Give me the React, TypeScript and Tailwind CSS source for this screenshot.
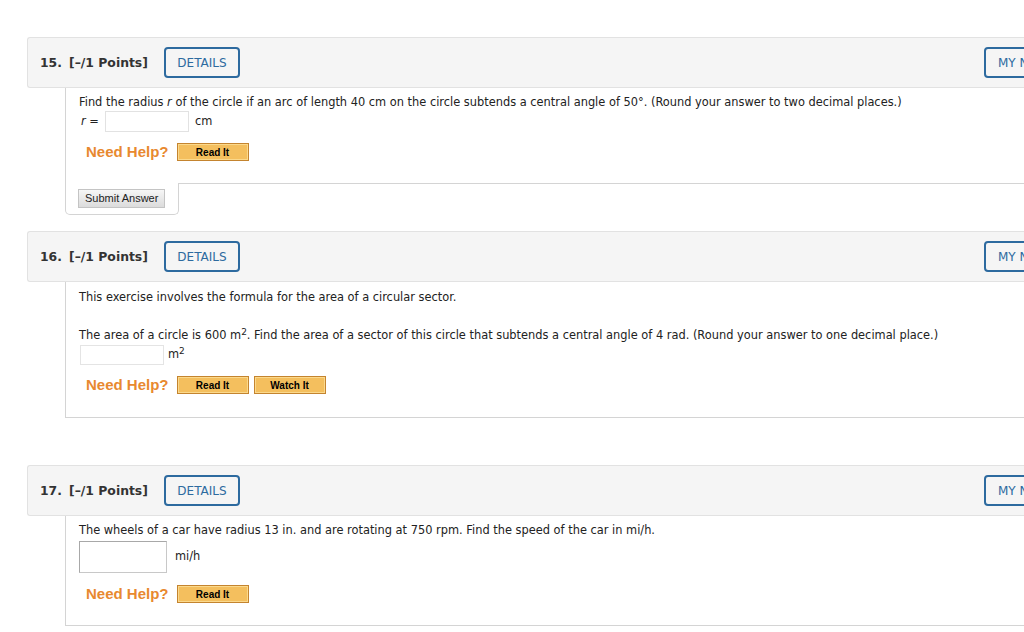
import React from 'react';

const body = "font-['DejaVu_Sans',Verdana,sans-serif] text-[11.4px] text-[#222]";

const Header = ({ num }: { num: number }) => (
  <div className="flex items-center h-[51px] border border-r-0 border-[#e2e2e2] bg-[#f5f5f5] rounded-l-[3px] pl-[12px] pr-[10px]">
    <div className="w-[124px] pt-[2px] font-['DejaVu_Sans',Verdana,sans-serif] font-bold text-[12.4px] text-[#333]">
      <span className="mr-[7px]">{num}.</span>[–/1 Points]
    </div>
    <button className="h-[31px] w-[76px] border-2 border-[#2d6a9f] rounded-[4px] text-[#2d6a9f] font-['DejaVu_Sans',Verdana,sans-serif] text-[12px] pt-[1px]">
      DETAILS
    </button>
    <button className="ml-auto h-[31px] w-[98px] border-2 border-[#2d6a9f] rounded-[4px] text-[#2d6a9f] font-['DejaVu_Sans',Verdana,sans-serif] text-[12px] text-left pl-[12px] pt-[1px]">
      MY NOTES
    </button>
  </div>
);

const HelpBtn = ({ label }: { label: string }) => (
  <span className="inline-flex items-center justify-center h-[18px] w-[72px] border border-[#c4842f] bg-[#f4bf5e] shadow-[inset_0_0_0_1px_#fbd98c] font-['Liberation_Sans',Arial,sans-serif] font-bold text-[10px] text-black">
    {label}
  </span>
);

const NeedHelp = ({ watch }: { watch?: boolean }) => (
  <div className="flex items-center h-[18px] pl-[7px]">
    <span className="font-['Liberation_Sans',Arial,sans-serif] font-bold text-[15px] text-[#e8892f] mr-[8px]">Need Help?</span>
    <HelpBtn label="Read It" />
    {watch && (
      <span className="ml-[5px] flex">
        <HelpBtn label="Watch It" />
      </span>
    )}
  </div>
);

export default function App() {
  return (
    <div className="w-[1024px] h-[632px] overflow-hidden bg-white">
      <div className="w-[1065px] ml-[27px] pt-[37px]">
        {/* 15 */}
        <Header num={15} />
        <div className={`ml-[38px] border-l border-[#d4d4d4] pl-[13px] pt-[6px] pb-[22px] ${body}`}>
          <div className="leading-[16px]">
            Find the radius <i>r</i> of the circle if an arc of length 40 cm on the circle subtends a central angle of 50°. (Round your answer to two decimal places.)
          </div>
          <div className="flex items-center mt-[1px]">
            <span className="w-[26px] pl-[2px]"><i>r</i> =</span>
            <span className="w-[84px] h-[21px] border border-[#e2e2e2]" />
            <span className="ml-[6px]">cm</span>
          </div>
          <div className="mt-[11px]">
            <NeedHelp />
          </div>
        </div>
        <div className="flex ml-[38px]">
          <div className="flex items-start w-[114px] h-[32px] border-l border-r border-b border-[#d4d4d4] rounded-b-[5px] pl-[12px] pt-[6px]">
            <button className="h-[19px] px-[6px] border border-[#c4c4c4] bg-gradient-to-b from-[#f6f6f6] to-[#dcdcdc] font-['Liberation_Sans',Arial,sans-serif] text-[11px] text-[#222] leading-[17px]">
              Submit Answer
            </button>
          </div>
          <div className="flex-1 border-t border-[#d4d4d4]" />
        </div>

        {/* 16 */}
        <div className="mt-[16px]">
          <Header num={16} />
        </div>
        <div className={`ml-[38px] border-l border-b border-[#d4d4d4] pl-[13px] pt-[7px] pb-[23px] ${body}`}>
          <div className="leading-[16px]">This exercise involves the formula for the area of a circular sector.</div>
          <div className="leading-[16px] mt-[22px]">
            The area of a circle is 600 m<sup className="text-[9px]">2</sup>. Find the area of a sector of this circle that subtends a central angle of 4 rad. (Round your answer to one decimal place.)
          </div>
          <div className="flex items-center mt-[2px]">
            <span className="ml-[1px] w-[84px] h-[20px] border border-[#e4e4e4]" />
            <span className="ml-[4px]">m<sup className="text-[9px]">2</sup></span>
          </div>
          <div className="mt-[11px]">
            <NeedHelp watch />
          </div>
        </div>

        {/* 17 */}
        <div className="mt-[47px]">
          <Header num={17} />
        </div>
        <div className={`ml-[38px] border-l border-b border-[#d4d4d4] pl-[13px] pt-[6px] pb-[22px] ${body}`}>
          <div className="leading-[16px]">
            The wheels of a car have radius 13 in. and are rotating at 750 rpm. Find the speed of the car in mi/h.
          </div>
          <div className="flex items-center mt-[3px]">
            <span className="w-[88px] h-[32px] border border-[#a8a8a8] border-b-[#c8c8c8] border-r-[#c8c8c8]" />
            <span className="ml-[8px]">mi/h</span>
          </div>
          <div className="mt-[12px]">
            <NeedHelp />
          </div>
        </div>
      </div>
    </div>
  );
}
